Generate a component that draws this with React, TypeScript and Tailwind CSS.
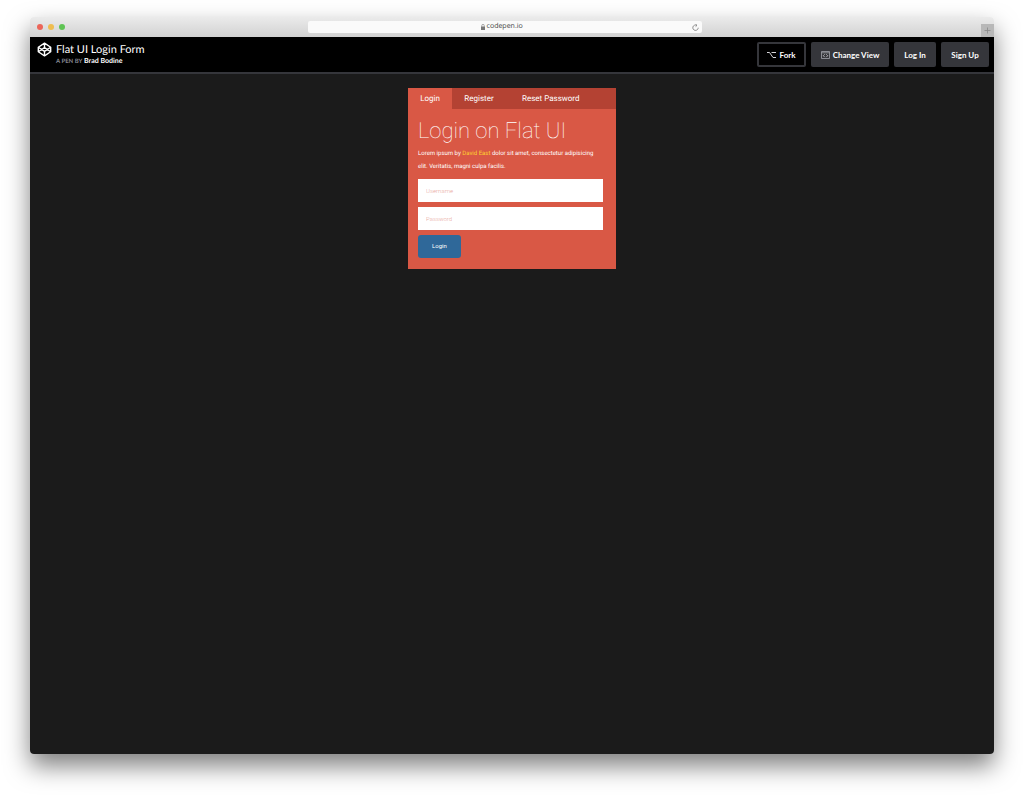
import type { ReactNode } from 'react';

const tabs = [
  { label: 'Login', className: 'w-11 justify-center bg-[#d95845]' },
  { label: 'Register', className: 'w-[54px] justify-center' },
  { label: 'Reset Password', className: 'flex-1 pl-4' },
];

function CodePenLogo() {
  return (
    <svg className="size-[15px] shrink-0" viewBox="0 0 16 16" fill="none" stroke="white" strokeWidth="1.5" strokeLinejoin="round" aria-hidden="true">
      <path d="M8 1.2 14.6 5.6v4.8L8 14.8 1.4 10.4V5.6Z" />
      <path d="M1.4 5.6 8 10l6.6-4.4M1.4 10.4 8 6l6.6 4.4M8 1.2V6M8 10v4.8" />
    </svg>
  );
}

function ForkIcon() {
  return (
    <svg className="h-2 w-[9px]" viewBox="0 0 9 8" fill="none" stroke="#d4d4d8" aria-hidden="true">
      <path d="M0 1.5h2.5L6 6.5h3M4.5 1.5H9" />
    </svg>
  );
}

function ViewIcon() {
  return (
    <svg className="h-2 w-[9px]" viewBox="0 0 9 8" fill="none" stroke="#a2a3ab" strokeWidth="0.8" aria-hidden="true">
      <path d="M.5.5h8v7h-8ZM.5 1.8h8" />
      <path d="M3.7 3.3 2.3 4.7l1.4 1.4M5.3 3.3l1.4 1.4-1.4 1.4" stroke="#d4d4d8" />
    </svg>
  );
}

function HeaderButton({ className, children }: { className: string; children: ReactNode }) {
  return (
    <button type="button" className={`flex h-[25px] items-center justify-center gap-[3px] rounded-[2px] text-[8px] font-bold whitespace-nowrap ${className}`}>
      {children}
    </button>
  );
}

function TitleBar() {
  return (
    <div className="flex h-5 items-center rounded-t bg-linear-to-b from-[#ebebeb] to-[#d2d2d2]">
      <div className="flex flex-[275] gap-[5px] pl-[7px]">
        <span className="size-[6px] rounded-full bg-[#ec6559]" />
        <span className="size-[6px] rounded-full bg-[#efbd50]" />
        <span className="size-[6px] rounded-full bg-[#5fc454]" />
      </div>
      <div className="flex h-3 flex-[393] items-center rounded-[2px] bg-[#fafafa] px-[3px] font-['Open_Sans',sans-serif] text-[7px] text-[#444]">
        <div className="flex flex-1 items-center justify-center gap-[2px]">
          <svg className="h-[6px] w-1" viewBox="0 0 4 6" aria-hidden="true">
            <path d="M0 2.5h4V6H0Z" fill="#777" />
            <path d="M.8 2.8V1.5a1.2 1.2 0 0 1 2.4 0v1.3" fill="none" stroke="#777" strokeWidth="0.6" />
          </svg>
          codepen.io
        </div>
        <button type="button" aria-label="Reload">
          <svg className="size-[7px]" viewBox="0 0 7 7" fill="none" stroke="#777" strokeWidth="0.8" aria-hidden="true">
            <path d="M6.2 3.7A2.7 2.7 0 1 1 4.7 1.3M3.5.1 5 1.4 3.6 2.6" />
          </svg>
        </button>
      </div>
      <div className="flex flex-[296] justify-end self-end">
        <button type="button" aria-label="New tab" className="flex size-[13px] items-center justify-center bg-[#b8b8b8]">
          <svg className="size-[7px]" viewBox="0 0 7 7" stroke="#888" strokeWidth="0.8" aria-hidden="true">
            <path d="M3.5.5v6M.5 3.5h6" />
          </svg>
        </button>
      </div>
    </div>
  );
}

function PenHeader() {
  return (
    <header className="flex justify-between border-b-2 border-[#35363b] bg-black pt-[5px] pr-[5px] pb-[5px] pl-[7px] font-[Lato,sans-serif] text-white">
      <div className="flex gap-1">
        <CodePenLogo />
        <div>
          <h1 className="text-[11px] leading-4">Flat UI Login Form</h1>
          <p className="text-[7px] leading-[7px] font-bold">
            <span className="text-[6px] text-[#868791]">A PEN BY</span>{' '}
            <a href="#">Brad Bodine</a>
          </p>
        </div>
      </div>
      <div className="flex gap-[5px]">
        <HeaderButton className="w-[49px] border-2 border-[#35363b]">
          <ForkIcon />
          Fork
        </HeaderButton>
        <HeaderButton className="w-[78px] bg-[#35363b]">
          <ViewIcon />
          Change View
        </HeaderButton>
        <HeaderButton className="w-[42px] bg-[#35363b]">Log In</HeaderButton>
        <HeaderButton className="w-12 bg-[#35363b]">Sign Up</HeaderButton>
      </div>
    </header>
  );
}

function LoginCard() {
  return (
    <section className="w-[208px] bg-[#d95845] font-[Roboto,sans-serif] text-white">
      <nav className="flex h-[21px] bg-[#b44233] text-[8px]">
        {tabs.map((tab) => (
          <a key={tab.label} href="#" className={`flex items-center ${tab.className}`}>
            {tab.label}
          </a>
        ))}
      </nav>
      <form className="pt-2 pr-[13px] pb-[11px] pl-[10px] text-[6px]">
        <h2 className="text-[22px] leading-[30px] font-thin">Login on Flat UI</h2>
        <p className="mb-[6px] leading-[13px]">
          Lorem ipsum by{' '}
          <a href="#" className="text-[#ffd02e]">
            David East
          </a>{' '}
          dolor sit amet, consectetur adipisicing
          <br />
          elit. Veritatis, magni culpa facilis.
        </p>
        <input type="text" aria-label="Username" placeholder="Username" className="mb-[5px] block h-[23px] w-full bg-white px-2 font-light text-[#d95845] placeholder:text-[#e9a8a0]" />
        <input type="password" aria-label="Password" placeholder="Password" className="mb-[5px] block h-[23px] w-full bg-white px-2 font-light text-[#d95845] placeholder:text-[#e9a8a0]" />
        <button type="submit" className="block h-[23px] w-[43px] rounded-[3px] bg-[#2f6899] pb-[2px]">
          Login
        </button>
      </form>
    </section>
  );
}

export default function App() {
  return (
    <div className="flex min-h-screen flex-col bg-white px-[30px] pt-[17px] pb-[43px] [text-rendering:geometricPrecision]">
      <div className="flex flex-1 flex-col rounded shadow-[0_12px_24px_rgba(0,0,0,0.5)]">
        <TitleBar />
        <PenHeader />
        <main className="flex flex-1 items-start justify-center rounded-b bg-[#1b1b1b] pt-[14px]">
          <LoginCard />
        </main>
      </div>
    </div>
  );
}
